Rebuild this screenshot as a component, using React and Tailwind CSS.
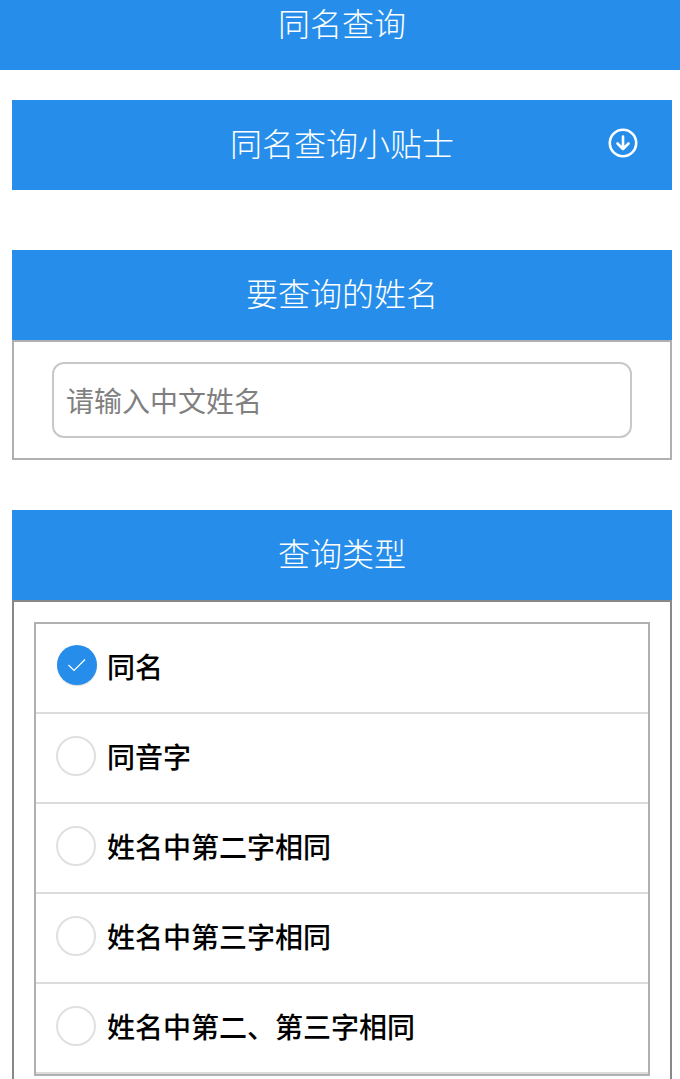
import React from 'react';

const options = ['同名', '同音字', '姓名中第二字相同', '姓名中第三字相同', '姓名中第二、第三字相同'];

const cjk = "font-['Helvetica_Neue','Liberation_Sans','Noto_Sans_CJK_SC',sans-serif]";

const SectionTitle = ({ children, right }) => (
  <div className="relative h-[90px] bg-[#268eea] text-center text-[32px] leading-[90px] font-light text-white">
    {children}
    {right}
  </div>
);

const Radio = ({ checked }) => {
  if (checked) {
    return (
      <span className="mb-[3px] ml-px flex h-10 w-10 shrink-0 items-center justify-center rounded-full bg-[#268eea] shadow-[0_1px_1px_#d8d8d8]">
        <svg width="20" height="16" viewBox="0 0 20 16" fill="none" stroke="#fff" strokeWidth="1.2">
          <path d="M1.5 8 L7 13.5 L18 2.5" />
        </svg>
      </span>
    );
  }
  return <span className="mr-px h-10 w-10 shrink-0 rounded-full border-2 border-[#e0e0e0] bg-white" />;
};

export default function App() {
  return (
    <div className={`h-[1079px] overflow-hidden bg-white ${cjk}`}>
      <div className="h-[70px] bg-[#268eea] pl-1 text-center text-[32px] leading-[50px] font-light text-white">同名查询</div>

      <div className="mt-[30px] mr-2 ml-3">
        <SectionTitle
          right={
            <svg className="absolute top-[28px] right-[34px]" width="30" height="30" viewBox="0 0 30 30" fill="none" stroke="#fff" strokeLinecap="round" strokeLinejoin="round">
              <circle cx="15" cy="15" r="13.2" strokeWidth="2.6" />
              <path d="M15 8.5 V21 M9.5 15.5 L15 21 L20.5 15.5" strokeWidth="2.6" />
            </svg>
          }
        >
          同名查询小贴士
        </SectionTitle>

        <div className="mt-[60px]">
          <SectionTitle>要查询的姓名</SectionTitle>
          <div className="border-2 border-[#b0b0b0] px-[38px] pt-5 pb-5">
            <input
              className="block h-[76px] w-full rounded-xl border-2 border-[#c8c8c8] bg-white px-3 pt-[6px] text-[28px] outline-none placeholder:text-[#808080]"
              placeholder="请输入中文姓名"
            />
          </div>
        </div>

        <div className="mt-[50px]">
          <SectionTitle>查询类型</SectionTitle>
          <div className="border-2 border-[#888888] px-5 py-5">
            <ul className="border-2 border-[#b0b0b0]">
              {options.map((label, i) => (
                <li key={label} className="flex h-[90px] items-center gap-[10px] border-b-2 border-[#dcdcdc] pr-5 pb-1 pl-5">
                  <Radio checked={i === 0} />
                  <span className="pt-[6px] text-[28px] font-medium text-black">{label}</span>
                </li>
              ))}
            </ul>
          </div>
        </div>
      </div>
    </div>
  );
}
